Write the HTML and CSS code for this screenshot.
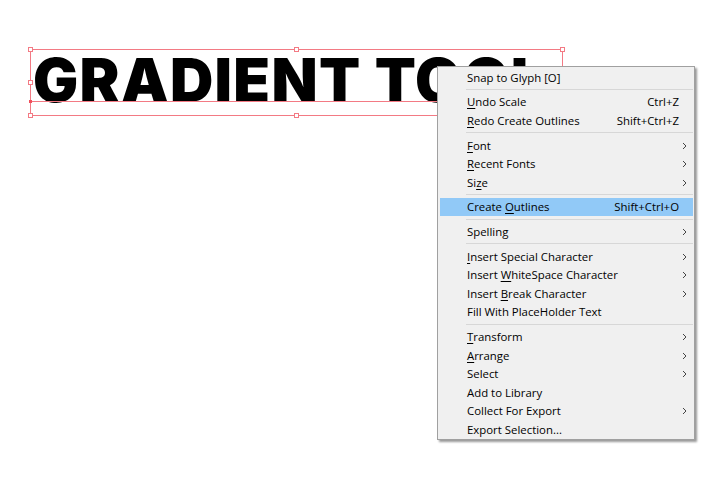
FILE: index.html
```html
<!DOCTYPE html>
<html>
<head>
<meta charset="utf-8">
<link rel="stylesheet" href="styles.css">
</head>
<body>
<div class="canvas">
  <div class="frame">
    <div class="headline">GRADIENT TOOL</div>
    <div class="baseline"></div>
    <span class="handle h-tl"></span>
    <span class="handle h-tm"></span>
    <span class="handle h-tr"></span>
    <span class="handle h-ml"></span>
    <span class="handle h-bl"></span>
    <span class="handle h-bm"></span>
    <span class="handle h-br"></span>
    <span class="bdot"></span>
  </div>

  <ul class="menu">
    <li class="item"><span class="label">Snap to Glyph [O]</span></li>
    <li class="sep"></li>
    <li class="item"><span class="label"><u>U</u>ndo Scale</span><span class="key">Ctrl+Z</span></li>
    <li class="item"><span class="label"><u>R</u>edo Create Outlines</span><span class="key">Shift+Ctrl+Z</span></li>
    <li class="sep"></li>
    <li class="item"><span class="label"><u>F</u>ont</span><span class="arrow"><svg width="5" height="8" viewBox="0 0 5 8"><path d="M1 1l3 3-3 3" fill="none" stroke="#444" stroke-width="1"/></svg></span></li>
    <li class="item"><span class="label"><u>R</u>ecent Fonts</span><span class="arrow"><svg width="5" height="8" viewBox="0 0 5 8"><path d="M1 1l3 3-3 3" fill="none" stroke="#444" stroke-width="1"/></svg></span></li>
    <li class="item"><span class="label">Si<u>z</u>e</span><span class="arrow"><svg width="5" height="8" viewBox="0 0 5 8"><path d="M1 1l3 3-3 3" fill="none" stroke="#444" stroke-width="1"/></svg></span></li>
    <li class="sep"></li>
    <li class="item active"><span class="label">Create <u>O</u>utlines</span><span class="key">Shift+Ctrl+O</span></li>
    <li class="sep"></li>
    <li class="item"><span class="label">Spelling</span><span class="arrow"><svg width="5" height="8" viewBox="0 0 5 8"><path d="M1 1l3 3-3 3" fill="none" stroke="#444" stroke-width="1"/></svg></span></li>
    <li class="sep"></li>
    <li class="item"><span class="label"><u>I</u>nsert Special Character</span><span class="arrow"><svg width="5" height="8" viewBox="0 0 5 8"><path d="M1 1l3 3-3 3" fill="none" stroke="#444" stroke-width="1"/></svg></span></li>
    <li class="item"><span class="label">Insert <u>W</u>hiteSpace Character</span><span class="arrow"><svg width="5" height="8" viewBox="0 0 5 8"><path d="M1 1l3 3-3 3" fill="none" stroke="#444" stroke-width="1"/></svg></span></li>
    <li class="item"><span class="label">Insert <u>B</u>reak Character</span><span class="arrow"><svg width="5" height="8" viewBox="0 0 5 8"><path d="M1 1l3 3-3 3" fill="none" stroke="#444" stroke-width="1"/></svg></span></li>
    <li class="item"><span class="label">Fill With PlaceHolder Text</span></li>
    <li class="sep"></li>
    <li class="item"><span class="label"><u>T</u>ransform</span><span class="arrow"><svg width="5" height="8" viewBox="0 0 5 8"><path d="M1 1l3 3-3 3" fill="none" stroke="#444" stroke-width="1"/></svg></span></li>
    <li class="item"><span class="label"><u>A</u>rrange</span><span class="arrow"><svg width="5" height="8" viewBox="0 0 5 8"><path d="M1 1l3 3-3 3" fill="none" stroke="#444" stroke-width="1"/></svg></span></li>
    <li class="item"><span class="label">Select</span><span class="arrow"><svg width="5" height="8" viewBox="0 0 5 8"><path d="M1 1l3 3-3 3" fill="none" stroke="#444" stroke-width="1"/></svg></span></li>
    <li class="item"><span class="label">Add to Library</span></li>
    <li class="item"><span class="label">Collect For Export</span><span class="arrow"><svg width="5" height="8" viewBox="0 0 5 8"><path d="M1 1l3 3-3 3" fill="none" stroke="#444" stroke-width="1"/></svg></span></li>
    <li class="item"><span class="label">Export Selection...</span></li>
  </ul>
</div>
</body>
</html>
```

FILE: styles.css
```css
html, body {
  margin: 0;
  padding: 0;
  background: #ffffff;
}

.canvas {
  position: relative;
  width: 720px;
  height: 477px;
  overflow: hidden;
}

.frame {
  position: absolute;
  left: 30px;
  top: 49px;
  width: 533px;
  height: 67px;
  border: 1px solid #f37a84;
  box-sizing: border-box;
}

.headline {
  position: absolute;
  left: 2px;
  top: -3px;
  font-family: "Inter", "Liberation Sans", sans-serif;
  font-weight: 900;
  font-size: 60px;
  line-height: 66px;
  letter-spacing: 1.3px;
  color: #000;
  white-space: nowrap;
}

.baseline {
  position: absolute;
  left: -1px;
  right: -1px;
  top: 51px;
  height: 1px;
  background: #f37a84;
}

.bdot {
  position: absolute;
  left: -2px;
  top: 50px;
  width: 3px;
  height: 3px;
  background: #f0505c;
}

.handle {
  position: absolute;
  width: 5px;
  height: 5px;
  border: 1px solid #f37a84;
  background: #fff;
  box-sizing: border-box;
}
.h-tl { left: -3px; top: -3px; }
.h-tm { left: 263px; top: -3px; }
.h-tr { right: -3px; top: -3px; }
.h-ml { left: -3px; top: 30px; }
.h-bl { left: -3px; bottom: -3px; }
.h-bm { left: 263px; bottom: -3px; }
.h-br { right: -3px; bottom: -3px; }

.menu {
  position: absolute;
  left: 437px;
  top: 66px;
  width: 258px;
  margin: 0;
  padding: 1px 1px 0 1px;
  list-style: none;
  box-sizing: border-box;
  background: #f0f0f0;
  border: 1px solid #a0a0a0;
  box-shadow: 2px 2px 2px rgba(0, 0, 0, 0.4);
  font-family: "Open Sans", "Noto Sans", sans-serif;
  font-size: 11.4px;
  color: #000;
}

.item {
  display: flex;
  align-items: center;
  height: 18.6px;
  margin: 0 0 0 1px;
  padding: 0 0 0 27px;
}

.item.active {
  background: #91c9f7;
}

.label {
  flex: 1;
  white-space: nowrap;
}

.label u {
  text-decoration-thickness: 1px;
  text-underline-offset: 2px;
}

.key {
  padding-right: 14px;
  white-space: nowrap;
}

.arrow {
  display: flex;
  width: 11px;
  padding-left: 2px;
  justify-content: flex-start;
  padding-top: 1px;
}

.sep {
  height: 6px;
  display: flex;
  align-items: center;
  padding-left: 27px;
}
.sep::before {
  content: "";
  flex: 1;
  height: 1px;
  background: #d7d7d7;
}
```
